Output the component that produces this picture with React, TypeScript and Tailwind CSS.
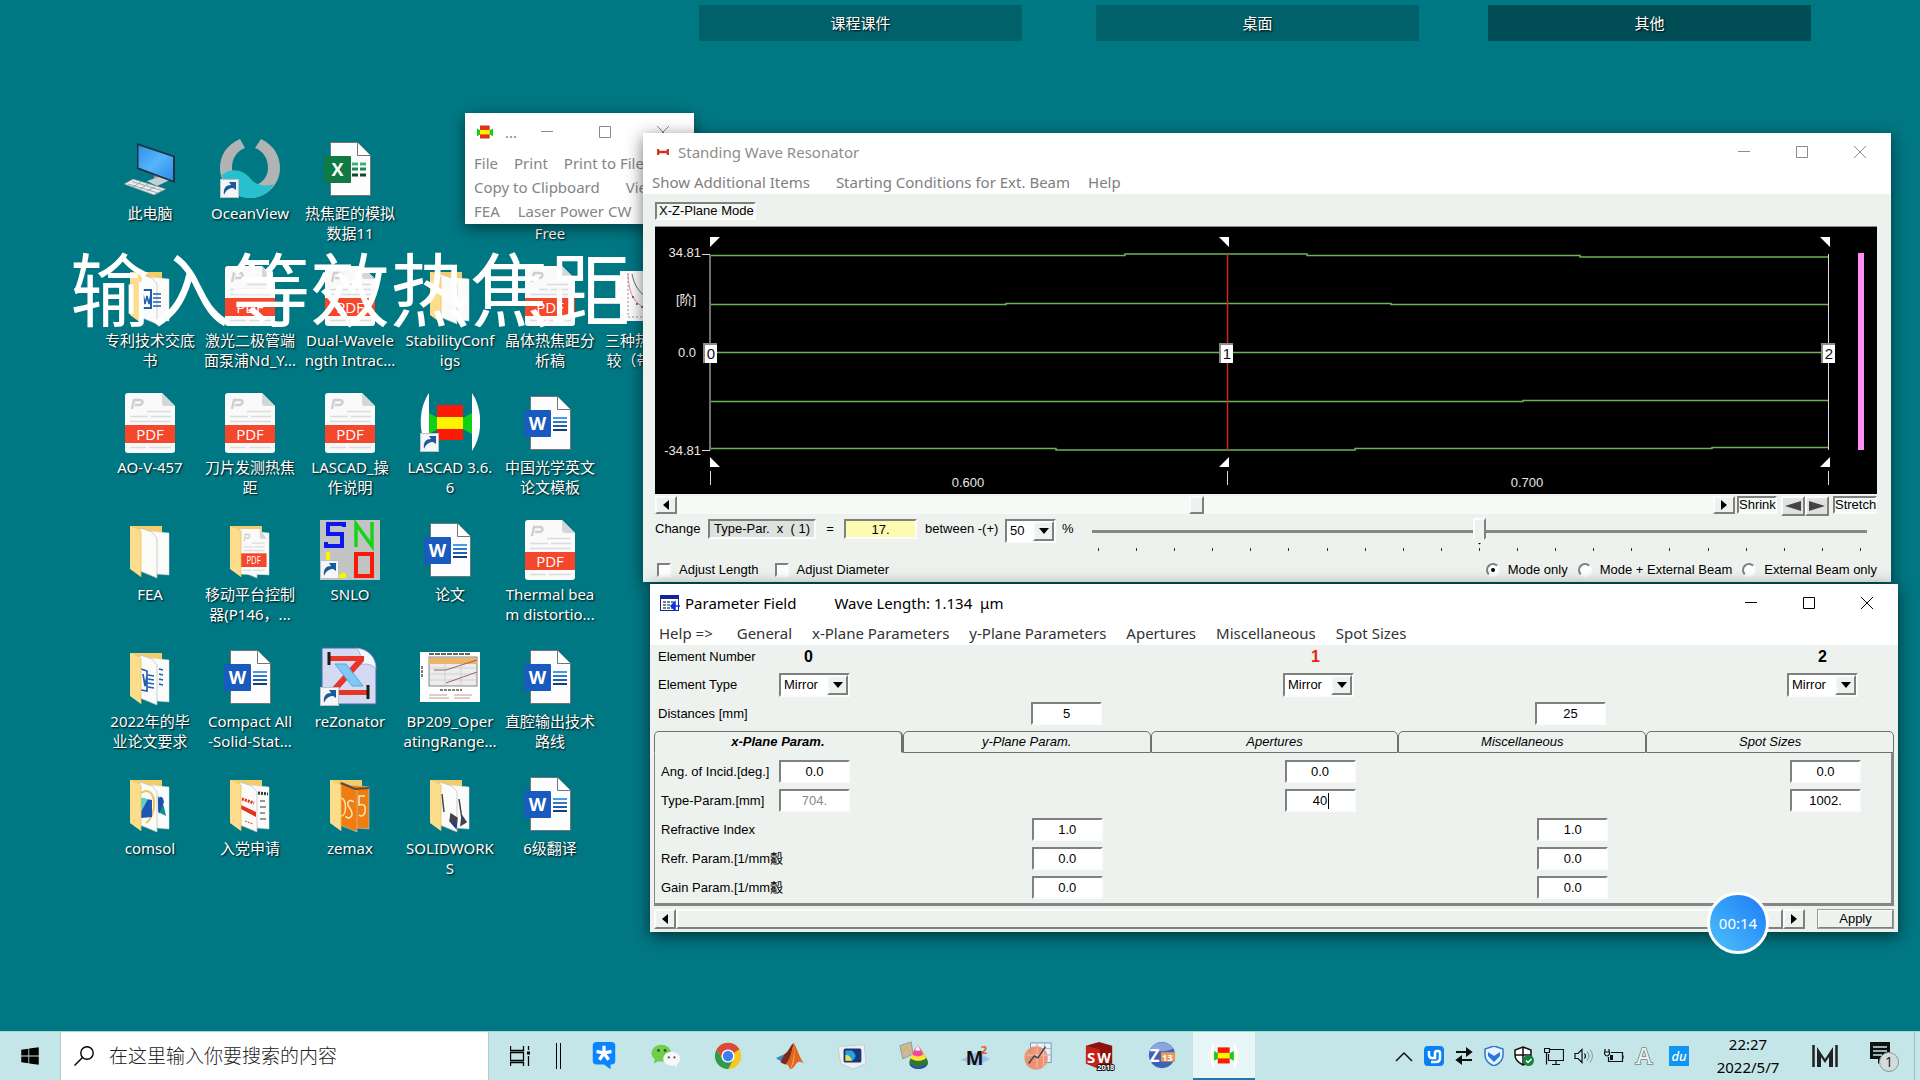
import { useState } from "react";
import type { ReactNode } from "react";
import { FaWindows } from "react-icons/fa";

/* ---------- desktop icon drawings, all on a 60x60 box ---------- */

function Shortcut() {
  return (
    <g>
      <rect x="0.5" y="40.5" width="18" height="18" fill="#f4f6f8" stroke="#b9c3c9" />
      <path d="M4 56c-1-7 2-10 7-10l-2-3h7v8l-3-2c-4 0-7 2-9 7z" fill="#1d5a9c" />
    </g>
  );
}

function PdfArt() {
  return (
    <g>
      <path d="M8 0h34l13 13v44a3 3 0 0 1-3 3H8a3 3 0 0 1-3-3V3a3 3 0 0 1 3-3z" fill="#fafafa" />
      <path d="M42 0v10a3 3 0 0 0 3 3h10z" fill="#d3d7da" />
      <path d="M12 16l2-9h6c4 0 3 5-1 5h-4" fill="none" stroke="#cfcfcf" strokeWidth="2.4" />
      <path d="M27 18.500h24M10 23.500h18M31 23.500h20M10 28.500h41M10 54.500h16M29 54.500h22" stroke="#dcdcdc" strokeWidth="1.500" />
      <rect x="5" y="32" width="50" height="18" fill="#f4472c" />
      <text x="30" y="46.500" textAnchor="middle" fontSize="15" fill="#fff" fontFamily="Open Sans">PDF</text>
    </g>
  );
}

function PdfIcon() {
  return <svg viewBox="0 0 60 60" className="size-15"><PdfArt /></svg>;
}

function OfficeIcon({ letter }: { letter: "W" | "X" }) {
  const word = letter === "W";
  return (
    <svg viewBox="0 0 60 60" className="size-15">
      <path d="M10.500 3.500h27l13 13v40h-40z" fill="#fdfdfd" stroke="#6f7578" />
      <path d="M37.500 3.500v13h13" fill="#fff" stroke="#6f7578" />
      {word ? (
        <g strokeWidth="2">
          <path d="M33 25h14" stroke="#4a9be8" />
          <path d="M33 29h14" stroke="#3279cb" />
          <path d="M33 33h14" stroke="#1f5fb2" />
          <path d="M33 37h14" stroke="#153f78" />
        </g>
      ) : (
        <g strokeWidth="3">
          <path d="M32 25h6M40 25h6" stroke="#36b37a" />
          <path d="M32 30h6M40 30h6" stroke="#1d8a55" />
          <path d="M32 36h6M40 36h6" stroke="#12482c" />
        </g>
      )}
      <rect x="4" y="17" width="27" height="27" rx="1" fill={word ? "#185abd" : "#0f7a41"} />
      <text x="17.500" y="37" textAnchor="middle" fontSize="18" fontWeight="bold" fill="#fff" fontFamily="Open Sans">{letter}</text>
    </svg>
  );
}

function FolderIcon({ children, fill = "#fbfbfa" }: { children?: ReactNode; fill?: string }) {
  return (
    <svg viewBox="0 0 60 60" className="size-15">
      <path d="M10 6h32v46H22z" fill="#f3cd6b" />
      <path d="M30 11l19 2v42l-12-1z" fill={fill} stroke="#d5d8d8" strokeWidth="0.500" />
      <path d="M20 8l12 4 5 6v40l-17-7z" fill={fill} stroke="#b9bdbd" strokeWidth="0.700" />
      {children}
      <path d="M10 6l11 5v46l-11-8z" fill="#fbdd8b" />
      <path d="M21 11v46" stroke="#e6bd58" strokeWidth="0.700" />
    </svg>
  );
}

function PcIcon() {
  return (
    <svg viewBox="0 0 60 60" className="size-15">
      <defs>
        <linearGradient id="screen" x1="0" y1="0" x2="1" y2="1">
          <stop offset="0" stopColor="#2f93e8" />
          <stop offset="0.500" stopColor="#55b4fa" />
          <stop offset="1" stopColor="#2b8be6" />
        </linearGradient>
      </defs>
      <path d="M34 34l8 3v6l-8-2z" fill="#8b979e" />
      <path d="M27 42l14-5 9 4-13 6z" fill="#c4ced3" />
      <path d="M17 4l38 13v27L17 30z" fill="#223240" />
      <path d="M18.500 6.500L53 18v23.500L18.500 28.500z" fill="url(#screen)" />
      <path d="M4 45l9-5 33 10-12 6z" fill="#e9eef0" stroke="#7c898f" strokeWidth="0.700" />
      <path d="M8 45l30 9M12 42.500l30 9M13 48l8-5M20 50l8-5M27 52l8-4" stroke="#8a979d" strokeWidth="0.800" />
    </svg>
  );
}

function OceanIcon() {
  return (
    <svg viewBox="0 0 60 60" className="size-15">
      <path d="M20 0C6 6 0 17 0 29c0 16 13 30 30 30s30-14 30-30C60 17 54 6 41 0l-6 9c8 3 13 10 13 20a18 18 0 0 1-36 0c0-10 5-17 13-20z" fill="#b2b3b4" />
      <path d="M2 36c10-8 21-5 28 3 6 8 15 9 24 6-5 9-14 14-24 14C17 59 5 49 2 36z" fill="#27c0cf" />
      <Shortcut />
    </svg>
  );
}

function LascadArt() {
  return (
    <g>
      <path d="M9 0C-2 16-2 42 9 58zM52 0c11 16 11 42 0 58z" fill="#fff" />
      <path d="M9 20l9 5v11l-9 5zM52 20l-9 5v11l9 5z" fill="#12cf18" />
      <rect x="17" y="12" width="26" height="35" fill="#fb1a05" />
      <rect x="17" y="24" width="26" height="12" fill="#fdf300" />
    </g>
  );
}

function LascadIcon() {
  return <svg viewBox="0 0 60 60" className="size-15"><LascadArt /><Shortcut /></svg>;
}

function SnloIcon() {
  return (
    <svg viewBox="0 0 60 60" className="size-15">
      <rect width="60" height="60" fill="#c2c4c3" />
      <g fill="none" strokeWidth="4">
        <path d="M24 7V4H8v10h14v12H6v-4" stroke="#0d15f0" />
        <path d="M36 27V4l16 22V2" stroke="#16d318" strokeWidth="3.500" />
        <path d="M8 32v24h16v-3" stroke="#fdf300" />
        <rect x="36" y="34" width="16" height="22" stroke="#fb1a05" />
      </g>
      <Shortcut />
    </svg>
  );
}

function ReZonatorIcon() {
  return (
    <svg viewBox="0 0 60 60" className="size-15">
      <path d="M2 1h34c12 1 20 9 20 19v37H2z" fill="#d5daf3" stroke="#4a67a5" />
      <path d="M36 1c5 4 6 11 3 17 7-2 13-1 17 4C56 10 48 2 36 1z" fill="#f6f8ff" stroke="#8c9bc7" strokeWidth="0.700" />
      <path d="M10 9h34v5L18 43h30v5H10v-5l26-29H10z" fill="#e8352a" />
      <path d="M15 17h11l17 22H32z" fill="#7fc9f2" stroke="#5aa9dc" />
      <path d="M9 5v13M48 38v14" stroke="#1c1c1c" strokeWidth="3" />
      <Shortcut />
    </svg>
  );
}

function ChartThumb() {
  return (
    <svg viewBox="0 0 60 60" className="size-15">
      <rect y="5" width="60" height="50" fill="#fff" />
      <path d="M9 7h42" stroke="#333" strokeWidth="1.500" strokeDasharray="5 1" />
      <rect x="9" y="10" width="48" height="29" fill="#ececec" stroke="#555" strokeWidth="0.700" />
      <rect x="9" y="11" width="48" height="6" fill="#f0b266" />
      <path d="M9 21h48M9 27h48M9 33h48M25 10v29M41 10v29" stroke="#b9b9b9" strokeWidth="0.500" />
      <path d="M14 23h12l31-10M26 36l31-11" fill="none" stroke="#8a5a50" strokeWidth="0.900" />
      <path d="M2 19v12M20 43h22" stroke="#555" strokeWidth="1.500" strokeDasharray="3 1" />
      <path d="M9 48h18M9 51h20M34 48h18M34 51h16" stroke="#c39a93" />
    </svg>
  );
}

function CurveThumb() {
  return (
    <svg viewBox="0 0 60 60" className="size-15">
      <rect y="5" width="60" height="50" fill="#fff" />
      <path d="M8 7v44h50" fill="none" stroke="#999" strokeDasharray="2 2" />
      <path d="M8 8c1 18 4 28 20 36" fill="none" stroke="#e58a96" />
      <path d="M12 8c3 14 8 20 24 30" fill="none" stroke="#666" />
      <circle cx="13" cy="31" r="1" fill="#8a1fb0" />
      <circle cx="17" cy="38" r="1" fill="#8a1fb0" />
      <circle cx="22" cy="41" r="1" fill="#8a1fb0" />
    </svg>
  );
}

type DesktopItem = { icon?: ReactNode; lines: string[] } | null;

const DESKTOP: DesktopItem[] = [
  { icon: <PcIcon />, lines: ["此电脑"] },
  { icon: <OceanIcon />, lines: ["OceanView"] },
  { icon: <OfficeIcon letter="X" />, lines: ["热焦距的模拟", "数据11"] },
  null,
  { lines: ["\u00a0", "Free"] },
  null,

  {
    icon: (
      <FolderIcon>
        <rect x="22" y="24" width="9" height="18" fill="#fff" stroke="#1f5fb2" strokeWidth="2" />
        <path d="M23 28l2 10 2-8 2 8 2-10M33 28h8M33 32h8M33 36h8M33 40h8" fill="none" stroke="#1f5fb2" strokeWidth="1.500" />
      </FolderIcon>
    ),
    lines: ["专利技术交底", "书"],
  },
  { icon: <PdfIcon />, lines: ["激光二极管端", "面泵浦Nd_Y..."] },
  { icon: <PdfIcon />, lines: ["Dual-Wavele", "ngth Intrac..."] },
  { icon: <FolderIcon />, lines: ["StabilityConf", "igs"] },
  { icon: <PdfIcon />, lines: ["晶体热焦距分", "析稿"] },
  { icon: <CurveThumb />, lines: ["三种热焦距比", "较（带隙）..."] },

  { icon: <PdfIcon />, lines: ["AO-V-457"] },
  { icon: <PdfIcon />, lines: ["刀片发测热焦", "距"] },
  { icon: <PdfIcon />, lines: ["LASCAD_操", "作说明"] },
  { icon: <LascadIcon />, lines: ["LASCAD 3.6.", "6"] },
  { icon: <OfficeIcon letter="W" />, lines: ["中国光学英文", "论文模板"] },
  null,

  { icon: <FolderIcon />, lines: ["FEA"] },
  {
    icon: (
      <FolderIcon>
        <g transform="translate(18 9) scale(0.52 0.76)"><PdfArt /></g>
      </FolderIcon>
    ),
    lines: ["移动平台控制", "器(P146，..."],
  },
  { icon: <SnloIcon />, lines: ["SNLO"] },
  { icon: <OfficeIcon letter="W" />, lines: ["论文"] },
  { icon: <PdfIcon />, lines: ["Thermal bea", "m distortio..."] },
  null,

  {
    icon: (
      <FolderIcon>
        <path d="M21 22l6 2v20l-6-1M23 27l2 12 2-10M28 28l6 1M28 32l6 1M28 36l6 1M28 40l6 1M39 22l4 1M39 27l4 1M39 32l4 1M39 37l4 1" fill="none" stroke="#1f5fb2" strokeWidth="1.700" />
      </FolderIcon>
    ),
    lines: ["2022年的毕", "业论文要求"],
  },
  { icon: <OfficeIcon letter="W" />, lines: ["Compact All", "-Solid-Stat..."] },
  { icon: <ReZonatorIcon />, lines: ["reZonator"] },
  { icon: <ChartThumb />, lines: ["BP209_Oper", "atingRange..."] },
  { icon: <OfficeIcon letter="W" />, lines: ["直腔输出技术", "路线"] },
  null,

  {
    icon: (
      <FolderIcon>
        <path d="M21 19c7-5 12 0 13 8s-2 18-8 22" fill="none" stroke="#ecc657" strokeWidth="2" />
        <path d="M21 24l11 2v17l-11 1z" fill="#1b55b5" />
        <path d="M21 24l7 1-7 13z" fill="#62d0c0" />
        <path d="M38 22c4 3 6 10 8 20l-8-4z" fill="#0f8f93" />
        <path d="M38 26c3-6 5-3 6 2l-5 12z" fill="#1e4fae" />
      </FolderIcon>
    ),
    lines: ["comsol"],
  },
  {
    icon: (
      <FolderIcon>
        <path d="M21 31l15 7v5l-15-8z" fill="#e0321f" />
        <path d="M22 25l12 4" stroke="#e0321f" strokeWidth="3" strokeDasharray="2 1" />
        <path d="M25 47l8 3" stroke="#e0321f" strokeDasharray="2 1" />
        <path d="M38 19l10 1" stroke="#333" strokeWidth="3" strokeDasharray="2 1" />
        <path d="M40 27h5M40 33h6M40 39h5M40 45h6" stroke="#777" strokeWidth="1.500" />
      </FolderIcon>
    ),
    lines: ["入党申请"],
  },
  {
    icon: (
      <FolderIcon fill="#f07d10">
        <path d="M21 9l14 6 14-1" fill="none" stroke="#5a4a3a" strokeWidth="2" />
        <g fill="none" stroke="#ffe7b8" strokeWidth="1.500">
          <path d="M21 24c6 1 6 18 0 18M34 28c-5-4-8 1-5 5s5 9 0 11c-2 0-3-1-3-2M45 22h-6v9c6-2 7 2 6 7-1 4-4 5-6 3" />
        </g>
      </FolderIcon>
    ),
    lines: ["zemax"],
  },
  {
    icon: (
      <FolderIcon>
        <path d="M22 20l2 18M31 40l6 4-1 10-6-7zM39 25l3 20M42 42l4 6-5 3z" fill="#3d4350" stroke="#3d4350" strokeWidth="1.500" />
        <path d="M33 49l3 4" stroke="#1c2fd0" strokeWidth="2" />
      </FolderIcon>
    ),
    lines: ["SOLIDWORK", "S"],
  },
  { icon: <OfficeIcon letter="W" />, lines: ["6级翻译"] },
];

function DesktopIcons() {
  return (
    <ul className="absolute left-[100px] top-[139px] grid auto-rows-[127px] grid-cols-[repeat(6,100px)]">
      {DESKTOP.map((item, i) => (
        <li key={i} className="flex flex-col items-center">
          {item && (
            <>
              <span className="h-15">{item.icon}</span>
              <span className="mt-1 whitespace-pre text-center text-[15px] leading-5 text-white [text-shadow:1px_1px_2px_#000]">
                {item.lines.join("\n")}
              </span>
            </>
          )}
        </li>
      ))}
    </ul>
  );
}

/* ---------- shared window parts ---------- */

function CaptionButtons({ tone }: { tone: string }) {
  return (
    <div className={`flex items-center pr-[2px] ${tone}`}>
      <button aria-label="Minimize" className="grid w-[58px] place-items-center">
        <svg viewBox="0 0 12 12" className="size-3 stroke-current"><path d="M0 5.500h12" /></svg>
      </button>
      <button aria-label="Maximize" className="grid w-[58px] place-items-center">
        <svg viewBox="0 0 12 12" className="size-3 fill-none stroke-current"><path d="M0.500 0.500h11v11h-11z" /></svg>
      </button>
      <button aria-label="Close" className="grid w-[58px] place-items-center">
        <svg viewBox="0 0 12 12" className="size-3 stroke-current"><path d="M0 0l12 12M12 0L0 12" /></svg>
      </button>
    </div>
  );
}

const SUNKEN = "border-2 border-t-[#7f817f] border-l-[#7f817f] border-r-[#fbfcfb] border-b-[#fbfcfb]";
const RAISED = "border-2 border-t-[#fbfcfb] border-l-[#fbfcfb] border-r-[#7f817f] border-b-[#7f817f]";

function Combo({ label, value, width }: { label: string; value: string; width: string }) {
  return (
    <div className={`relative h-6 ${width} ${SUNKEN}`}>
      <select aria-label={label} className="block h-full w-full appearance-none bg-white pl-[3px] text-[13px] leading-5 outline-none">
        <option>{value}</option>
      </select>
      <span className={`pointer-events-none absolute inset-y-0 right-0 grid w-[21px] place-items-center bg-[#eef2ef] ${RAISED}`}>
        <svg viewBox="0 0 10 6" className="h-[6px] w-[10px]"><path d="M0 0h10L5 6z" /></svg>
      </span>
    </div>
  );
}

function Field({ label, value, tone = "text-black", caret }: { label: string; value: string; tone?: string; caret?: boolean }) {
  return (
    <div className="relative">
      <input
        aria-label={label}
        defaultValue={value}
        className={`block h-[23px] w-[71px] bg-white text-center text-[13px] outline-none ${tone} ${SUNKEN}`}
      />
      {caret && <i className="absolute left-[43px] top-1 h-4 w-px bg-black" />}
    </div>
  );
}

function ArrowButton({ dir, label }: { dir: "left" | "right"; label: string }) {
  return (
    <button aria-label={label} className={`grid h-full w-[22px] shrink-0 place-items-center bg-[#eef2ef] ${RAISED}`}>
      <svg viewBox="0 0 6 10" className="h-[10px] w-[6px]">
        <path d={dir === "left" ? "M6 0v10L0 5z" : "M0 0v10l6-5z"} />
      </svg>
    </button>
  );
}

/* ---------- main LASCAD window ---------- */

function LascadWindow() {
  return (
    <section className="absolute left-[465px] top-[113px] h-[111px] w-[229px] overflow-hidden bg-white text-[#858585] shadow-[0_4px_14px_rgba(0,0,0,0.5)]">
      <header className="flex h-[38px] items-center justify-between pl-3">
        <div className="flex items-center gap-3">
          <svg viewBox="9 8 43 43" className="size-4">
            <path d="M9 20l9 5v11l-9 5zM52 20l-9 5v11l9 5z" fill="#12cf18" />
            <rect x="17" y="12" width="26" height="35" fill="#e3301c" />
            <rect x="17" y="24" width="26" height="12" fill="#fdf300" />
          </svg>
          <span className="text-[15px]">...</span>
        </div>
        <CaptionButtons tone="text-[#8a8a8a]" />
      </header>
      <nav className="whitespace-nowrap pl-[9px] text-[15px] leading-6">
        <div className="flex gap-4"><a href="#file">File</a><a href="#print">Print</a><a href="#printfile">Print to File</a></div>
        <div className="flex gap-[26px]"><a href="#copy">Copy to Clipboard</a><a href="#view">View</a></div>
        <div className="flex gap-[18px]"><a href="#fea">FEA</a><a href="#power">Laser Power CW</a></div>
      </nav>
    </section>
  );
}

/* ---------- resonator window ---------- */

function NodeBox({ x, n }: { x: number; n: string }) {
  return (
    <g>
      <rect x={x - 7} y="117" width="14" height="20" fill="#fff" />
      <path d={`M${x - 6} 137v-19h13`} fill="none" stroke="#8a8a8a" strokeWidth="2" />
      <text x={x + 1} y="133" textAnchor="middle" fontSize="15" fill="#111">{n}</text>
    </g>
  );
}

function ModePlot() {
  return (
    <svg viewBox="0 1 1222 267" className="block w-full bg-black" fontFamily="Liberation Sans, Noto Sans CJK SC, sans-serif">
      <g fill="none" stroke="#6cb457" strokeWidth="1.500">
        <path d="M56 29.500H470V28H652V29.500H925V31H1173" />
        <path d="M56 78.500H351V77.500H736V78.500H1173" />
        <path d="M56 126.500H1173" />
        <path d="M56 175.500H868V174.500H1173" />
        <path d="M56 222.500H401V224H700V222.500H1057V221.500H1173" />
      </g>
      <path d="M47 28.500h8V224.500H47M55.500 245v14M1173.500 28V224M1173.500 245v14M572.500 245v14" fill="none" stroke="#dcdcdc" />
      <path d="M572.500 28V224" stroke="#c8281e" strokeWidth="1.500" />
      <path d="M55 11h10L55 21zM574 11H564l10 10zM1175 11h-10l10 10zM55 231v10h10zM574 231v10H564zM1175 231v10h-10z" fill="#fff" />
      <rect x="1203" y="27" width="6" height="197" fill="#ff8df5" />
      <g fill="#e6e6e6" fontSize="13">
        <text x="46" y="31" textAnchor="end">34.81</text>
        <text x="41" y="131" textAnchor="end">0.0</text>
        <text x="46" y="229" textAnchor="end">-34.81</text>
        <text x="31" y="78" textAnchor="middle">[阶]</text>
        <text x="313" y="261" textAnchor="middle">0.600</text>
        <text x="872" y="261" textAnchor="middle">0.700</text>
      </g>
      <NodeBox x={55} n="0" />
      <NodeBox x={571} n="1" />
      <NodeBox x={1173} n="2" />
    </svg>
  );
}

const VIEW_MODES = ["Mode only", "Mode + External Beam", "External Beam only"];

function ResonatorWindow() {
  const [view, setView] = useState(0);

  return (
    <section className="absolute left-[643px] right-[29px] top-[133px] bg-[#eef2ef] text-black shadow-[0_4px_16px_rgba(0,0,0,0.55)]">
      <header className="flex h-[38px] items-center justify-between bg-white pl-[14px] text-[#8d8d8d]">
        <div className="flex items-center gap-[9px]">
          <svg viewBox="0 0 12 8" className="h-2 w-3"><path d="M1 1v6M11 1v6M1 4h10" stroke="#d2341f" strokeWidth="2.500" /></svg>
          <h2 className="text-[15px]">Standing Wave Resonator</h2>
        </div>
        <CaptionButtons tone="text-[#8a8a8a]" />
      </header>
      <nav className="flex h-[23px] items-center gap-[26px] bg-white pl-[9px] text-[15px] text-[#808080]">
        <a href="#items">Show Additional Items</a>
        <a href="#conditions">Starting Conditions for Ext. Beam</a>
        <a href="#help" className="-ml-2">Help</a>
      </nav>

      <div className="pb-px pl-3 pr-[14px] pt-2 font-['Liberation_Sans','Noto_Sans_CJK_SC',sans-serif] text-[13px]">
        <p className={`w-fit bg-[#f6f8f6] pl-[2px] leading-[14px] ${SUNKEN}`}>X-Z-Plane Mode</p>
        <div className="mt-[6px] border-t border-[#8a8c8a]"><ModePlot /></div>

        <div className="mt-[2px] flex h-[18px] items-stretch gap-[2px]">
          <div className="flex flex-1 items-stretch bg-[#f8faf8]">
            <ArrowButton dir="left" label="Scroll left" />
            <div className="flex-[512]" />
            <div className={`w-[15px] bg-[#eef2ef] ${RAISED}`} />
            <div className="flex-[510]" />
            <ArrowButton dir="right" label="Scroll right" />
          </div>
          <span className={`w-10 bg-[#f6f8f6] leading-[14px] ${SUNKEN}`}>Shrink</span>
          <div className="mx-[2px] flex h-5">
            <button aria-label="Shrink" className={`grid w-6 place-items-center bg-[#dfe2df] ${RAISED}`}>
              <svg viewBox="0 0 16 10" className="h-[10px] w-4"><path d="M16 0v10L0 5z" fill="#444" /></svg>
            </button>
            <button aria-label="Stretch" className={`grid w-6 place-items-center bg-[#dfe2df] ${RAISED}`}>
              <svg viewBox="0 0 16 10" className="h-[10px] w-4"><path d="M0 0v10l16-5z" fill="#444" /></svg>
            </button>
          </div>
          <span className={`w-11 bg-[#f6f8f6] leading-[14px] ${SUNKEN}`}>Stretch</span>
        </div>

        <div className="mt-[5px] flex items-start">
          <span className="w-[53px] leading-5">Change</span>
          <span className={`h-5 w-[108px] bg-[#dee1de] pl-1 leading-4 whitespace-pre ${SUNKEN}`}>Type-Par.  x  ( 1)</span>
          <span className="w-7 text-center leading-5">=</span>
          <input aria-label="Parameter value" defaultValue="17." className={`h-5 w-[73px] bg-[#fdfbb0] text-center outline-none ${SUNKEN}`} />
          <span className="w-[88px] pl-2 leading-5">between -(+)</span>
          <Combo label="Range" value="50" width="w-[51px]" />
          <span className="w-9 pl-[6px] leading-5">%</span>
          <div className="flex-1 pr-[10px]">
            <input
              type="range"
              aria-label="Parameter"
              min={0}
              max={200}
              defaultValue={100}
              className="block h-6 w-full appearance-none bg-[linear-gradient(#858785,#858785)] bg-size-[100%_3px] bg-center bg-no-repeat outline-none [&::-webkit-slider-thumb]:h-[27px] [&::-webkit-slider-thumb]:w-[13px] [&::-webkit-slider-thumb]:appearance-none [&::-webkit-slider-thumb]:border-2 [&::-webkit-slider-thumb]:border-l-white [&::-webkit-slider-thumb]:border-r-[#7f817f] [&::-webkit-slider-thumb]:border-t-white [&::-webkit-slider-thumb]:bg-[#eef2ef] [&::-webkit-slider-thumb]:[clip-path:polygon(0_0,100%_0,100%_75%,50%_100%,0_75%)]"
            />
            <div className="mt-[5px] flex justify-between px-[6px]">
              {Array.from({ length: 21 }, (_, i) => <i key={i} className="h-[3px] w-px bg-[#333]" />)}
            </div>
          </div>
        </div>

        <div className="mt-2 flex h-[22px] items-center justify-between pl-[2px]">
          <div className="flex gap-4">
            {["Adjust Length", "Adjust Diameter"].map((t) => (
              <label key={t} className="flex items-center gap-2">
                <input type="checkbox" className={`size-[14px] appearance-none bg-white ${SUNKEN}`} />
                {t}
              </label>
            ))}
          </div>
          <div className="flex gap-[10px]">
            {VIEW_MODES.map((t, i) => (
              <label key={t} className="flex items-center gap-2">
                <input
                  type="radio"
                  name="view"
                  checked={view === i}
                  onChange={() => setView(i)}
                  className={`grid size-[14px] appearance-none place-items-center rounded-full bg-white checked:before:size-1 checked:before:rounded-full checked:before:bg-black ${SUNKEN}`}
                />
                {t}
              </label>
            ))}
          </div>
        </div>
      </div>
    </section>
  );
}

/* ---------- parameter window ---------- */

const MENU = ["General", "x-Plane Parameters", "y-Plane Parameters", "Apertures", "Miscellaneous", "Spot Sizes"];
const TABS = ["x-Plane Param.", "y-Plane Param.", "Apertures", "Miscellaneous", "Spot Sizes"];

// one entry per element / gap between elements, null where nothing is edited
const ROWS: { label: string; cells: (string | null)[] }[] = [
  { label: "Ang. of Incid.[deg.]", cells: ["0.0", null, "0.0", null, "0.0"] },
  { label: "Type-Param.[mm]", cells: ["704.", null, "40", null, "1002."] },
  { label: "Refractive Index", cells: [null, "1.0", null, "1.0", null] },
  { label: "Refr. Param.[1/mm觳", cells: [null, "0.0", null, "0.0", null] },
  { label: "Gain Param.[1/mm觳", cells: [null, "0.0", null, "0.0", null] },
];

function ParameterWindow() {
  const [tab, setTab] = useState(0);

  return (
    <section className="absolute left-[650px] right-[22px] top-[584px] bg-[#eef2ef] text-black shadow-[0_4px_16px_rgba(0,0,0,0.6)]">
      <header className="flex h-[38px] items-center justify-between bg-white pl-[10px]">
        <div className="flex items-center gap-[5px]">
          <svg viewBox="0 0 20 16" className="h-4 w-5">
            <rect x="0.500" y="0.500" width="18" height="15" fill="#fff" stroke="#12249a" />
            <rect width="19" height="4" fill="#12249a" />
            <path d="M3 7h3M7 7h3M11 7h3M3 10h3M3 13h3M7 13h3M11 13h3" stroke="#555" strokeWidth="1.500" />
            <path d="M7 10h3" stroke="#1bb6c9" strokeWidth="2" />
            <path d="M20 11h-7M15 7l-4 4 4 4z" fill="#1330e8" stroke="#1330e8" strokeWidth="1.500" />
          </svg>
          <h2 className="flex gap-[38px] whitespace-pre text-[15px]">
            <span>Parameter Field</span>
            <span>Wave Length: 1.134  μm</span>
          </h2>
        </div>
        <CaptionButtons tone="text-black" />
      </header>
      <nav className="flex h-[23px] items-center gap-5 bg-white pl-[9px] text-[15px] text-[#333]">
        <a href="#help" className="mr-1">Help =&gt;</a>
        {MENU.map((m) => <a key={m} href={`#${m}`}>{m}</a>)}
      </nav>

      <div className="px-1 font-['Liberation_Sans','Noto_Sans_CJK_SC',sans-serif] text-[13px]">
        <div className="flex h-6 items-center pl-1">
          <span className="w-[121px]">Element Number</span>
          <div className="flex flex-1 justify-between pr-9 text-[16px] font-bold">
            <span className="w-[71px] pl-[25px]">0</span>
            <span className="w-[71px] pl-7 text-[#f02010]">1</span>
            <span className="w-[71px] pl-[31px]">2</span>
          </div>
        </div>
        <div className="flex h-[31px] items-center pl-1">
          <span className="w-[121px]">Element Type</span>
          <div className="flex flex-1 justify-between pr-9">
            {[0, 1, 2].map((n) => <Combo key={n} label={`Element ${n} type`} value="Mirror" width="w-[71px]" />)}
          </div>
        </div>
        <div className="flex h-[27px] items-center pl-1">
          <span className="w-[121px]">Distances [mm]</span>
          <div className="flex flex-1 justify-between pr-9">
            <span className="w-[71px]" />
            <Field label="Distance 0 to 1" value="5" />
            <span className="w-[71px]" />
            <Field label="Distance 1 to 2" value="25" />
            <span className="w-[71px]" />
          </div>
        </div>

        <div role="tablist" className="mt-1 flex">
          {TABS.map((t, i) => (
            <button
              key={t}
              role="tab"
              aria-selected={tab === i}
              onClick={() => setTab(i)}
              className={`h-[22px] flex-1 rounded-t-[5px] border border-[#6f716f] text-center italic leading-5 ${tab === i ? "border-b-transparent border-r-2 font-bold" : ""}`}
            >
              {t}
            </button>
          ))}
        </div>
        <div className="border-b-[3px] border-l border-r-[3px] border-[#858785] pb-px pl-[6px] pr-[30px] pt-1">
          {ROWS.map((row) => (
            <div key={row.label} className="flex h-[29px] items-center">
              <span className="w-[118px] whitespace-nowrap">{row.label}</span>
              <div className="flex flex-1 justify-between">
                {row.cells.map((cell, i) =>
                  cell === null ? (
                    <span key={i} className="w-[71px]" />
                  ) : (
                    <Field
                      key={i}
                      label={`${row.label} ${i}`}
                      value={cell}
                      tone={cell === "704." ? "text-[#8a8a8a]" : undefined}
                      caret={cell === "40"}
                    />
                  ),
                )}
              </div>
            </div>
          ))}
        </div>

        <div className="flex gap-3 pb-[3px] pt-[3px]">
          <div className="flex h-5 flex-1">
            <ArrowButton dir="left" label="Previous elements" />
            <div className={`flex-1 ${RAISED}`} />
            <ArrowButton dir="right" label="Next elements" />
          </div>
          <button className={`h-5 w-[77px] leading-4 outline outline-[#9a9c9a] -outline-offset-1 ${RAISED}`}>Apply</button>
        </div>
      </div>
    </section>
  );
}

/* ---------- taskbar ---------- */

const APPS: { name: string; art: ReactNode }[] = [
  {
    name: "Notes",
    art: (
      <>
        <path d="M8 1h16a4 4 0 0 1 4 4v16a4 4 0 0 1-4 4h-1v5l-7-5H8a4 4 0 0 1-4-4V5a4 4 0 0 1 4-4z" fill="#0a84ff" />
        <path d="M16 5v8M16 13L8 11M16 13l8-2M16 13l-5 7M16 13l5 7" stroke="#fff" strokeWidth="3.500" />
      </>
    ),
  },
  {
    name: "WeChat",
    art: (
      <>
        <ellipse cx="11" cy="13" rx="10.500" ry="9" fill="#6fce4b" />
        <path d="M4 19l-1 5 6-3z" fill="#6fce4b" />
        <circle cx="8" cy="10" r="1.500" fill="#2c5a1d" /><circle cx="15" cy="10" r="1.500" fill="#2c5a1d" />
        <ellipse cx="22" cy="19" rx="9" ry="7.500" fill="#f7f8f7" />
        <path d="M25 25l3 4-1-6z" fill="#f7f8f7" />
        <circle cx="19" cy="17.500" r="1.200" fill="#555" /><circle cx="25" cy="17.500" r="1.200" fill="#555" />
      </>
    ),
  },
  {
    name: "Chrome",
    art: (
      <>
        <circle cx="16" cy="16" r="14" fill="#f8c820" />
        <path d="M16 16L3.900 9A14 14 0 0 1 28.100 9z" fill="#dd4a37" />
        <path d="M16 9h12.200A14 14 0 0 0 3.900 9l6 10z" fill="#dd4a37" />
        <path d="M3.900 9A14 14 0 0 0 16 30l6-10.500L10 19.500z" fill="#2f9a50" />
        <circle cx="16" cy="16" r="7" fill="#fff" />
        <circle cx="16" cy="16" r="5.500" fill="#3b7ff0" />
      </>
    ),
  },
  {
    name: "MATLAB",
    art: (
      <>
        <path d="M1 18l9-4 6 6-5 5z" fill="#3f85b8" />
        <path d="M10 14c5-3 7-11 10-12l-4 18-5 5-5-2z" fill="#7a2a1a" />
        <path d="M20 2c4 6 6 16 11 22-4-2-6-3-9 1-2 3-4 5-6 5-1-3-3-6-5-5 4-3 7-14 9-23z" fill="#e2661e" />
        <path d="M20 2c1 8 0 20-4 28 6-6 5-18 4-28z" fill="#f6b05a" />
      </>
    ),
  },
  {
    name: "COMSOL",
    art: (
      <>
        <path d="M1 6l28-2 2 20-14 6L4 24z" fill="#eef1f1" stroke="#c3cbcc" />
        <rect x="7" y="8" width="19" height="15" rx="2" fill="#18367a" />
        <path d="M9 10h7c5 4 5 8 0 11H9z" fill="#2b9fd8" />
        <path d="M9 15c4 0 6 2 7 6H9z" fill="#eedf4a" />
      </>
    ),
  },
  {
    name: "Mode viewer",
    art: (
      <>
        <path d="M1 5l12-4 2 13-11 5z" fill="#c2bba9" stroke="#9a9484" />
        <path d="M4 13l4-7 4 6" fill="none" stroke="#e2b53a" strokeWidth="1.500" />
        <path d="M20 5c3 3 11 14 11 18 0 9-20 9-20 0 0-4 7-15 9-18z" fill="#2d7a2d" />
        <path d="M20 5c3 3 8 9 9 13-4 4-13 4-17 0 1-4 6-10 8-13z" fill="#fde23a" />
        <path d="M20 5c2 2 5 6 6 9-3 3-9 3-12 0 1-3 4-7 6-9z" fill="#f04aa0" />
        <path d="M20 5l3 5h-6z" fill="#fff" />
        <path d="M12 25c4 5 13 5 17 0" fill="none" stroke="#3346c8" strokeWidth="2" />
      </>
    ),
  },
  {
    name: "M2",
    art: (
      <>
        <path d="M0 20l16-8 15 7-14 8z" fill="#9fc2ee" />
        <text x="5" y="26" fontSize="20" fontWeight="bold" fill="#111" fontFamily="Open Sans">M</text>
        <text x="21" y="14" fontSize="12" fontWeight="bold" fill="#e05a30" fontFamily="Open Sans">2</text>
      </>
    ),
  },
  {
    name: "Origin",
    art: (
      <>
        <path d="M8 2h22v21H8z" fill="#e8f1f8" stroke="#6f93b5" />
        <path d="M8 8h22M8 15h22M15 2v21M23 2v21" stroke="#9db8d0" />
        <circle cx="14" cy="18" r="12.500" fill="#f08a66" opacity="0.900" />
        <path d="M15 7v21M22 10v18M4 15h22" stroke="#f9c7b3" />
        <path d="M6 24l6-8 4 2 8-12" fill="none" stroke="#33475c" strokeWidth="1.500" />
      </>
    ),
  },
  {
    name: "SolidWorks",
    art: (
      <>
        <path d="M1 5L15 1l14 4v19l-13 6L1 24z" fill="#8c130d" />
        <path d="M1 5l15 4v21L1 24z" fill="#c6221a" />
        <text x="2" y="23" fontSize="16" fontWeight="bold" fill="#fff" fontFamily="Open Sans">S</text>
        <text x="13" y="23" fontSize="15" fontWeight="bold" fill="#fff" fontFamily="Open Sans">W</text>
        <text x="13" y="31" fontSize="8" fontWeight="bold" fill="#fff" stroke="#111" strokeWidth="2" paintOrder="stroke" fontFamily="Open Sans">2018</text>
      </>
    ),
  },
  {
    name: "Zemax 13",
    art: (
      <>
        <circle cx="16" cy="15" r="14" fill="#3e62b4" />
        <path d="M4 8a14 14 0 0 1 24 0c-8 4-16 4-24 0z" fill="#8ba6dd" />
        <rect x="15" y="12" width="15" height="10" fill="#e99a58" />
        <text x="3" y="22" fontSize="18" fontWeight="bold" fill="#fff" fontFamily="Open Sans">Z</text>
        <text x="16" y="21" fontSize="10" fontWeight="bold" fill="#fff" fontFamily="Open Sans">13</text>
      </>
    ),
  },
  { name: "LASCAD", art: <g transform="translate(1 2) scale(0.490)"><LascadArt /></g> },
];

const TRAY: { name: string; art: ReactNode }[] = [
  { name: "Show hidden icons", art: <path d="M2 15l8-8 8 8" fill="none" stroke="#111" strokeWidth="1.500" /> },
  {
    name: "Mouse",
    art: (
      <>
        <rect width="20" height="20" rx="4" fill="#0b80f5" />
        <path d="M5 5v4q0 3 3 3h3V7q0-2 2-2h1q2 0 2 2v5q0 4-4 4H7" fill="none" stroke="#fff" strokeWidth="2.500" />
      </>
    ),
  },
  { name: "Switcher", art: <path d="M2 6h13M13 3l4 3-4 3zM5 14h13M7 11l-4 3 4 3z" fill="#111" stroke="#111" strokeWidth="2" /> },
  {
    name: "Guard",
    art: (
      <>
        <path d="M10 0l9 3v6c0 6-4 9-9 11C5 18 1 15 1 9V3z" fill="#e8f3ff" stroke="#2a78d8" strokeWidth="1.500" />
        <path d="M4 6l6 4 6-4v4l-6 6-6-6z" fill="#2a78d8" />
      </>
    ),
  },
  {
    name: "Defender",
    art: (
      <>
        <path d="M9 1l8 3v5c0 5-4 8-8 10C5 17 1 14 1 9V4z" fill="#fff" stroke="#111" strokeWidth="1.500" />
        <path d="M9 1v18M1 9h16" stroke="#111" strokeWidth="1.500" />
        <circle cx="14.500" cy="14.500" r="5.500" fill="#13843f" />
        <path d="M12 14.500l2 2 3.500-3.500" fill="none" stroke="#fff" strokeWidth="1.500" />
      </>
    ),
  },
  { name: "Network", art: <path d="M6 3.500h13.500v11H4.500V8M12 15v4M8 18.500h8M0.500 2.500h5v4h-5zM2.500 7v11.500" fill="none" stroke="#111" strokeWidth="1.200" /> },
  {
    name: "Volume",
    art: (
      <>
        <path d="M1 7.500h3l4-4v13l-4-4H1zM10.500 7.500q2 2.500 0 5" fill="none" stroke="#111" strokeWidth="1.200" />
        <path d="M13 5.500q4 4.500 0 9M16 3.500q5 6.500 0 13" fill="none" stroke="#8fa5a6" strokeWidth="1.200" />
      </>
    ),
  },
  {
    name: "Battery",
    art: (
      <>
        <path d="M7 6.500h11.500v9H4.500V11M19 9.500v3M1 3v3M5 3v3M0.500 6v2q2.500 4 5 0V6z" fill="none" stroke="#111" strokeWidth="1.200" />
        <rect x="6" y="9" width="3" height="5" fill="#111" />
      </>
    ),
  },
  { name: "Input mode", art: <path d="M1 18.500h6v-2H6l1-3h6l1 3h-1v2h6v-2h-2L12 1.500H8L3 16.500H1zM8 10.500l2-6 2 6z" fill="#e9f2f2" stroke="#8a9798" /> },
];

function Taskbar() {
  return (
    <footer className="relative flex h-[49px] shrink-0 items-stretch border-t border-[#a8d6da] bg-[#c5e6e8] text-black">
      <button aria-label="Start" className="grid w-[60px] place-items-center">
        <FaWindows className="size-5" />
      </button>
      <label className="flex w-[429px] items-center gap-[15px] border-x border-[#b5c8ca] bg-white pl-[13px]">
        <svg viewBox="0 0 20 20" className="size-5 fill-none stroke-black">
          <circle cx="13" cy="7" r="6.200" strokeWidth="1.400" />
          <path d="M8.500 11.500L0.500 19.500" strokeWidth="1.400" />
        </svg>
        <input
          aria-label="搜索"
          placeholder="在这里输入你要搜索的内容"
          className="w-80 bg-transparent text-[19px] font-light text-[#222] outline-none placeholder:text-[#222]"
        />
      </label>
      <button aria-label="Task view" className="grid w-[63px] place-items-center">
        <svg viewBox="0 0 21 20" className="h-5 w-[21px] fill-none stroke-black">
          <path d="M0.500 0v4.500h13V0M0.500 20v-3.500h13V20M0.500 6.500h13v8h-13zM18.500 0v4M18.500 10v10" strokeWidth="1.300" />
          <path d="M17 7h3" strokeWidth="3" />
        </svg>
      </button>
      <div className="my-[11px] ml-1 mr-3 w-[5px] border-x border-black" />
      <div className="flex">
        {APPS.map((app) => (
          <button
            key={app.name}
            aria-label={app.name}
            className="grid w-[62px] place-items-center last:border-b-2 last:border-b-[#1f78b4] last:bg-[#e8f6f7]"
          >
            <svg viewBox="0 0 32 32" className="size-[30px]">{app.art}</svg>
          </button>
        ))}
      </div>
      <div className="ml-auto flex items-center">
        {TRAY.map((t) => (
          <button key={t.name} aria-label={t.name} className="grid w-[30px] place-items-center">
            <svg viewBox="0 0 20 20" className="size-5">{t.art}</svg>
          </button>
        ))}
        <button aria-label="Baidu input" className="ml-[10px] grid size-5 place-items-center bg-[#0e96f2] text-[13px] font-medium italic leading-5 text-white">du</button>
        <time className="w-[118px] text-center text-[15px] leading-[23px]">22:27<br />2022/5/7</time>
        <button aria-label="Monitor" className="grid w-9 place-items-center">
          <svg viewBox="0 0 26 22" className="h-[22px] w-[26px]">
            <path d="M1.500 0v22M24.500 0v22" stroke="#222" strokeWidth="2.500" />
            <path d="M5 22V2l8 12 8-12v20h-4V12l-4 6-4-6v10z" fill="#222" />
          </svg>
        </button>
        <button aria-label="Notifications" className="ml-[25px] grid w-[32px] place-items-center">
          <svg viewBox="0 0 32 32" className="size-8">
            <path d="M2 2h20v17h-7l-5 5v-5H2z" fill="#111" />
            <path d="M5 7h14M5 11h14M5 15h9" stroke="#c5e6e8" strokeWidth="1.300" />
            <circle cx="21" cy="22" r="9.500" fill="#d3dcdc" stroke="#8b9797" />
            <text x="21" y="27" textAnchor="middle" fontSize="14" fill="#111" fontFamily="Open Sans">1</text>
          </svg>
        </button>
        <span className="ml-[14px] h-full w-[6px] border-l border-[#9fbcbe]" />
      </div>
    </footer>
  );
}

export default function App() {
  return (
    <main className="flex h-screen flex-col overflow-hidden bg-[#007884] font-['Noto_Sans','Noto_Sans_CJK_SC',sans-serif]">
      <div className="relative flex-1">
        {/* collapsed desktop groups */}
        <div className="text-center text-[15px] leading-9 text-white [text-shadow:1px_1px_2px_#000]">
          <h2 className="absolute left-[699px] top-[5px] h-9 w-[323px] bg-[#00616b]">课程课件</h2>
          <h2 className="absolute left-[1096px] top-[5px] h-9 w-[323px] bg-[#00616b]">桌面</h2>
          <h2 className="absolute left-[1488px] top-[5px] h-9 w-[323px] bg-[#004d55]">其他</h2>
        </div>

        <DesktopIcons />
        <LascadWindow />
        <ResonatorWindow />
        <ParameterWindow />

        {/* caption laid over the recording */}
        <p className="pointer-events-none absolute left-[70px] top-[249px] whitespace-nowrap text-[80px] leading-[80px] text-white">
          输入等效热焦距
        </p>
        <button className="absolute left-[1707px] top-[892px] size-[62px] rounded-full border-[3px] border-white bg-linear-to-tr from-[#4fc0fb] to-[#1f7bf5] text-[15px] text-white">
          00:14
        </button>
      </div>
      <Taskbar />
    </main>
  );
}
